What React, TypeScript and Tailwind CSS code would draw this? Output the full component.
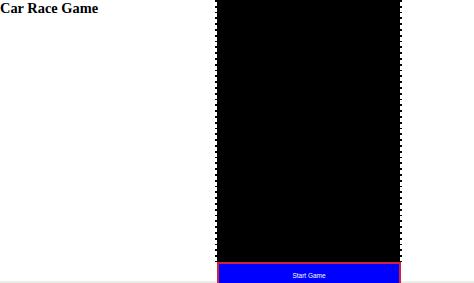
export default function App() {
  return (
    <div className="flex h-[283px] w-[474px] overflow-hidden bg-white bg-[linear-gradient(to_top,#ecece8_2px,#ffffff_2px)]">
      <div className="w-[215px] shrink-0">
        <h1 className="m-0 font-['Liberation_Serif','Times_New_Roman',serif] text-[14.4px] font-bold leading-[16px] text-black">
          Car Race Game
        </h1>
      </div>
      <div className="flex w-[187px] shrink-0 flex-col">
        <div className="flex h-[262px] shrink-0">
          <div className="w-[2px] bg-[repeating-linear-gradient(to_bottom,#000_0px,#000_1.8px,#fff_1.8px,#fff_5.8px)]" />
          <div className="flex-1 bg-black" />
          <div className="w-[2px] bg-[repeating-linear-gradient(to_bottom,#000_0px,#000_1.8px,#fff_1.8px,#fff_5.8px)]" />
        </div>
        <button className="ml-[2px] h-[27px] w-[184px] shrink-0 border-2 border-[#d3203f] bg-[#0000ff] font-['Liberation_Sans',Arial,sans-serif] text-[6.5px] text-white">
          Start Game
        </button>
      </div>
    </div>
  );
}
